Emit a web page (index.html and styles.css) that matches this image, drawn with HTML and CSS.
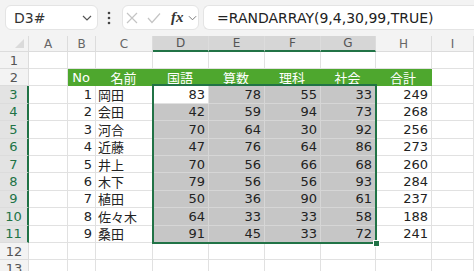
FILE: index.html
```html
<!DOCTYPE html>
<html lang="ja">
<head>
    <meta charset="UTF-8">
    <title>RANDARRAY</title>
    <link rel="stylesheet" href="styles.css">
</head>
<body>

    <div class="formula-bar">
        <div class="name-box">
            <span>D3#</span>
            <svg class="chev" width="10" height="6" viewBox="0 0 10 6"><polyline points="1,1 5,5 9,1" fill="none" stroke="#555" stroke-width="1.2"/></svg>
        </div>
        <svg class="dots" width="4" height="14" viewBox="0 0 4 14"><circle cx="2" cy="2" r="1.3" fill="#444"/><circle cx="2" cy="7" r="1.3" fill="#444"/><circle cx="2" cy="12" r="1.3" fill="#444"/></svg>
        <div class="func-box">
            <svg class="cancel" width="12" height="12" viewBox="0 0 12 12"><path d="M1 1 L11 11 M11 1 L1 11" stroke="#c4c4c4" stroke-width="1.2"/></svg>
            <svg class="enter" width="14" height="12" viewBox="0 0 14 12"><polyline points="1,6 5,10.5 13,1.5" fill="none" stroke="#c4c4c4" stroke-width="1.2"/></svg>
            <span class="fx">fx</span>
            <svg class="chev" width="9" height="6" viewBox="0 0 10 6"><polyline points="1,1 5,5 9,1" fill="none" stroke="#777" stroke-width="1.1"/></svg>
        </div>
        <div class="formula">=RANDARRAY(9,4,30,99,TRUE)</div>
    </div>

    <div class="sheet">
        <div class="corner"><svg width="9" height="9" viewBox="0 0 9 9"><polygon points="9,0 9,9 0,9" fill="#dadada"/></svg></div>
        <div class="ch">A</div><div class="ch">B</div><div class="ch">C</div>
        <div class="ch on">D</div><div class="ch on">E</div><div class="ch on">F</div><div class="ch on">G</div>
        <div class="ch">H</div><div class="ch">I</div>

        <div class="rh">1</div><div class="c"></div><div class="c"></div><div class="c"></div><div class="c"></div><div class="c"></div><div class="c"></div><div class="c"></div><div class="c"></div><div class="c"></div>

        <div class="rh">2</div><div class="c"></div>
        <div class="c hd">No</div><div class="c hd">名前</div><div class="c hd">国語</div><div class="c hd">算数</div><div class="c hd">理科</div><div class="c hd">社会</div><div class="c hd">合計</div>
        <div class="c"></div>

        <div class="rh on">3</div><div class="c"></div><div class="c n">1</div><div class="c">岡田</div>
        <div class="c n">83</div><div class="c n s">78</div><div class="c n s">55</div><div class="c n s">33</div><div class="c n">249</div><div class="c"></div>

        <div class="rh on">4</div><div class="c"></div><div class="c n">2</div><div class="c">会田</div>
        <div class="c n s">42</div><div class="c n s">59</div><div class="c n s">94</div><div class="c n s">73</div><div class="c n">268</div><div class="c"></div>

        <div class="rh on">5</div><div class="c"></div><div class="c n">3</div><div class="c">河合</div>
        <div class="c n s">70</div><div class="c n s">64</div><div class="c n s">30</div><div class="c n s">92</div><div class="c n">256</div><div class="c"></div>

        <div class="rh on">6</div><div class="c"></div><div class="c n">4</div><div class="c">近藤</div>
        <div class="c n s">47</div><div class="c n s">76</div><div class="c n s">64</div><div class="c n s">86</div><div class="c n">273</div><div class="c"></div>

        <div class="rh on">7</div><div class="c"></div><div class="c n">5</div><div class="c">井上</div>
        <div class="c n s">70</div><div class="c n s">56</div><div class="c n s">66</div><div class="c n s">68</div><div class="c n">260</div><div class="c"></div>

        <div class="rh on">8</div><div class="c"></div><div class="c n">6</div><div class="c">木下</div>
        <div class="c n s">79</div><div class="c n s">56</div><div class="c n s">56</div><div class="c n s">93</div><div class="c n">284</div><div class="c"></div>

        <div class="rh on">9</div><div class="c"></div><div class="c n">7</div><div class="c">植田</div>
        <div class="c n s">50</div><div class="c n s">36</div><div class="c n s">90</div><div class="c n s">61</div><div class="c n">237</div><div class="c"></div>

        <div class="rh on">10</div><div class="c"></div><div class="c n">8</div><div class="c">佐々木</div>
        <div class="c n s">64</div><div class="c n s">33</div><div class="c n s">33</div><div class="c n s">58</div><div class="c n">188</div><div class="c"></div>

        <div class="rh on">11</div><div class="c"></div><div class="c n">9</div><div class="c">桑田</div>
        <div class="c n s">91</div><div class="c n s">45</div><div class="c n s">33</div><div class="c n s">72</div><div class="c n">241</div><div class="c"></div>

        <div class="rh">12</div><div class="c"></div><div class="c"></div><div class="c"></div><div class="c"></div><div class="c"></div><div class="c"></div><div class="c"></div><div class="c"></div><div class="c"></div>

        <div class="rh">13</div><div class="c"></div><div class="c"></div><div class="c"></div><div class="c"></div><div class="c"></div><div class="c"></div><div class="c"></div><div class="c"></div><div class="c"></div>

        <div class="selection"><div class="handle"></div></div>
    </div>

</body>
</html>
```

FILE: styles.css
```css
body {
    margin: 0;
    width: 474px;
    height: 271px;
    overflow: hidden;
    background: #fff;
    font-family: "DejaVu Sans", "Noto Sans CJK JP", sans-serif;
    color: #222;
}

/* formula bar */

.formula-bar {
    display: flex;
    align-items: center;
    gap: 4px;
    height: 36px;
    padding: 0 0 1px 5px;
    box-sizing: border-box;
    background: #f3f3f3;
}

.name-box,
.func-box,
.formula {
    height: 25px;
    background: #fff;
    border: 1px solid #e4e4e4;
    border-radius: 6px;
    box-sizing: border-box;
    display: flex;
    align-items: center;
}

.name-box {
    width: 93px;
    padding: 0 5px 0 8px;
    justify-content: space-between;
    font-size: 14px;
    color: #333;
}

.dots {
    margin: 0 7px 0 5px;
}

.func-box {
    width: 77px;
    padding: 0 0 0 3px;
}

.func-box .enter {
    margin-left: 9px;
}

.fx {
    font-family: "Liberation Serif", serif;
    font-style: italic;
    font-weight: bold;
    font-size: 15px;
    color: #333;
    margin: 0 4px 0 10px;
}

.formula {
    flex: 1;
    padding-left: 13px;
    border-radius: 6px 0 0 6px;
    border-right: none;
    font-size: 14px;
    color: #222;
}

/* sheet */

.sheet {
    position: relative;
    display: grid;
    grid-template-columns: 29px 39px 28px 57px 56px 56px 56px 55px 56px 1fr;
    grid-template-rows: 16px 17px repeat(12, 17.4px);
    font-size: 13px;
}

.corner,
.ch,
.rh {
    background: #f3f3f3;
    color: #666;
    font-size: 12px;
    display: flex;
    align-items: center;
    justify-content: center;
    box-sizing: border-box;
}

.corner {
    justify-content: flex-end;
    align-items: flex-end;
    padding: 0 4px 3px 0;
    border-right: 1px solid #dcdcdc;
    border-bottom: 1px solid #dcdcdc;
}

.ch {
    border-right: 1px solid #dcdcdc;
    border-bottom: 1px solid #dcdcdc;
}

.ch.on {
    background: #d6d6d6;
    color: #555;
    border-bottom: 2px solid #217346;
}

.rh {
    font-size: 13px;
    color: #555;
    border-right: 1px solid #dcdcdc;
    border-bottom: 1px solid #dcdcdc;
}

.rh.on {
    background: #e3e3e3;
    color: #217346;
    border-right: 2px solid #217346;
}

.c {
    border-right: 1px solid #e1e1e1;
    border-bottom: 1px solid #e1e1e1;
    box-sizing: border-box;
    padding: 0 3px 0 2px;
    display: flex;
    align-items: center;
    white-space: nowrap;
    overflow: hidden;
}

.n {
    justify-content: flex-end;
}

.s {
    background: #c6c6c6;
    border-color: #d6d6d6;
}

.hd {
    background: #4ea72e;
    border-color: #4ea72e;
    color: #fff;
    justify-content: center;
}

.selection {
    position: absolute;
    grid-column: 5 / 9;
    grid-row: 4 / 13;
    top: -2px;
    left: -1px;
    right: -1px;
    bottom: -1px;
    border: 2px solid #217346;
    pointer-events: none;
}

.handle {
    position: absolute;
    right: -5px;
    bottom: -5px;
    width: 5px;
    height: 5px;
    background: #217346;
    border: 1px solid #fff;
}
```
